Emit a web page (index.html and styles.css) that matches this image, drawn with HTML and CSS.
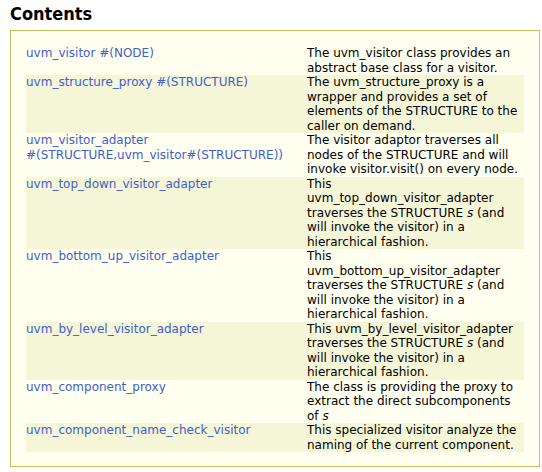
FILE: index.html
```html
<!DOCTYPE html>
<html>
<head>
<meta charset="utf-8">
<link rel="stylesheet" href="styles.css">
</head>
<body>
<h2 class="title">Contents</h2>
<div class="box">
  <table class="summary">
    <tr class="odd">
      <td class="name"><a href="#">uvm_visitor #(NODE)</a></td>
      <td class="desc">The uvm_visitor class provides an abstract base class for a visitor.</td>
    </tr>
    <tr class="even">
      <td class="name"><a href="#">uvm_structure_proxy #(STRUCTURE)</a></td>
      <td class="desc">The uvm_structure_proxy is a wrapper and provides a set of elements of the STRUCTURE to the caller on demand.</td>
    </tr>
    <tr class="odd">
      <td class="name"><a href="#">uvm_visitor_adapter <span class="nw">#(STRUCTURE,uvm_visitor#(STRUCTURE))</span></a></td>
      <td class="desc">The visitor adaptor traverses all nodes of the STRUCTURE and will invoke visitor.visit() on every node.</td>
    </tr>
    <tr class="even">
      <td class="name"><a href="#">uvm_top_down_visitor_adapter</a></td>
      <td class="desc">This<br>uvm_top_down_visitor_adapter traverses the STRUCTURE <i>s</i> (and will invoke the visitor) in a hierarchical fashion.</td>
    </tr>
    <tr class="odd">
      <td class="name"><a href="#">uvm_bottom_up_visitor_adapter</a></td>
      <td class="desc">This uvm_bottom_up_visitor_adapter traverses the STRUCTURE <i>s</i> (and will invoke the visitor) in a hierarchical fashion.</td>
    </tr>
    <tr class="even">
      <td class="name"><a href="#">uvm_by_level_visitor_adapter</a></td>
      <td class="desc">This uvm_by_level_visitor_adapter traverses the STRUCTURE <i>s</i> (and will invoke the visitor) in a hierarchical fashion.</td>
    </tr>
    <tr class="odd">
      <td class="name"><a href="#">uvm_component_proxy</a></td>
      <td class="desc">The class is providing the proxy to extract the direct subcomponents of <i>s</i></td>
    </tr>
    <tr class="even">
      <td class="name"><a href="#">uvm_component_name_check_visitor</a></td>
      <td class="desc">This specialized visitor analyze the naming of the current component.</td>
    </tr>
  </table>
</div>
</body>
</html>
```

FILE: styles.css
```css
html, body {
  margin: 0;
  padding: 0;
  background: #ffffff;
}
body {
  padding: 0 2px 0 10px;
  font-family: "DejaVu Sans", sans-serif;
  font-size: 12px;
  color: #000000;
}
.title {
  margin: 3px 0 5px 0;
  font-family: "DejaVu Sans Condensed", "DejaVu Sans", sans-serif;
  font-size: 18px;
  line-height: 22px;
  font-weight: bold;
  color: #000000;
}
.box {
  border: 1px solid #c6c05c;
  background: #ffffef;
  padding: 15px 15px 14px 15px;
}
.summary {
  border-collapse: collapse;
  border-spacing: 0;
  width: 100%;
}
.summary td {
  padding: 0;
  vertical-align: top;
  line-height: 14.5px;
}
.summary .name {
  width: 281px;
}
.summary .desc {
  width: 217px;
}
.summary .even td {
  background: #f5f5d7;
}
.summary a {
  color: #3f60cc;
  text-decoration: none;
}
.nw {
  white-space: nowrap;
}
```
